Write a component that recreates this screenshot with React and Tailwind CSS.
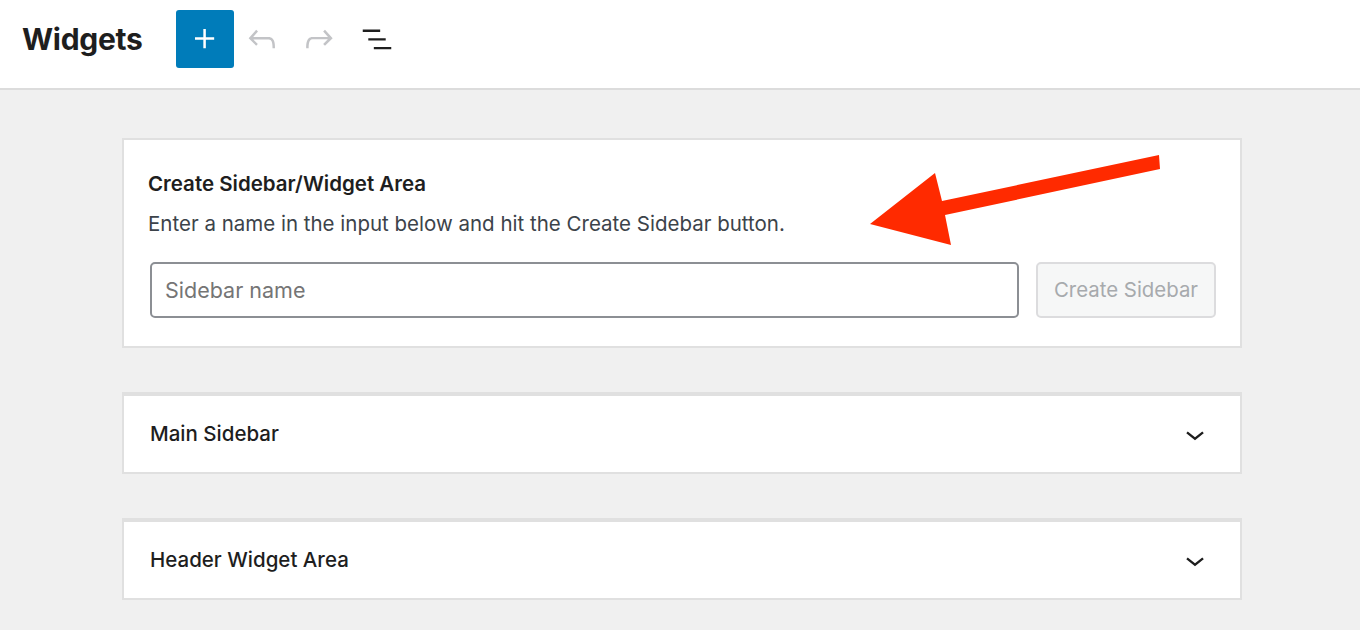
import React from "react";

const FONT = { fontFamily: 'Inter, "Noto Sans", "Liberation Sans", sans-serif' };

function WpIcon({ d, size, className }) {
  return (
    <svg width={size} height={size} viewBox="0 0 24 24" className={className} fill="currentColor" aria-hidden="true">
      <path d={d} />
    </svg>
  );
}

const ICONS = {
  plus: "M11 12.5V17.5H12.5V12.5H17.5V11H12.5V6H11V11H6V12.5H11Z",
  undo: "M18.3 11.7c-.6-.6-1.4-.9-2.3-.9H6.7l2.9-3.3-1.1-1-4.5 5L8.5 16l1-1-2.7-2.7H16c.5 0 .9.2 1.3.5 1 1 1 3.4 1 4.5v.3h1.5v-.2c0-1.5 0-4.3-1.5-5.7z",
  redo: "M15.6 6.5l-1.1 1 2.9 3.3H8c-.9 0-1.7.3-2.3.9-1.4 1.5-1.4 4.2-1.4 5.6v.2h1.5v-.3c0-1.1 0-3.5 1-4.5.3-.3.7-.5 1.3-.5h9.2L14.5 15l1.1 1.1 4.6-4.6-4.6-5z",
  listView: "M3 6h11v1.5H3V6Zm3.5 5.5h11V13h-11v-1.5ZM21 17H10v1.5h11V17Z",
  chevronDown: "M17.5 11.6L12 16l-5.5-4.4.9-1.2L12 14l4.6-3.6 1 1.2z",
};

function Header() {
  return (
    <header className="flex h-[90px] items-center border-b-2 border-[#dcdcdc] bg-white pb-[10px]">
      <h1 className="pl-[22px] pr-[34px] text-[30px] font-bold tracking-[-0.3px] text-[#1e1e1e]">Widgets</h1>
      <button type="button" className="flex h-[58px] w-[58px] items-center justify-center rounded-[3px] bg-[#007cba] text-white">
        <WpIcon d={ICONS.plus} size={40} />
      </button>
      <div className="ml-[8px] flex items-center text-[#c3c4c7]">
        <WpIcon d={ICONS.undo} size={40} />
        <WpIcon d={ICONS.redo} size={40} className="ml-[17px]" />
      </div>
      <WpIcon d={ICONS.listView} size={38} className="ml-[19px] text-[#1e1e1e]" />
    </header>
  );
}

function RedArrow() {
  return (
    <svg
      className="pointer-events-none absolute left-0 top-0"
      width="1120"
      height="210"
      viewBox="0 0 1120 210"
      aria-hidden="true"
    >
      <polygon
        points="1035,15 1036,29 821,75 827,105 746,84 811,33 818,61"
        fill="#ff2a00"
      />
    </svg>
  );
}

function CreateCard() {
  return (
    <section className="relative border-2 border-[#e0e0e0] bg-white px-[24px] pb-[28px] pt-[31px]">
      <h2 className="text-[20.5px] font-semibold leading-[26px] text-[#1e1e1e]">Create Sidebar/Widget Area</h2>
      <p className="mt-[14px] text-[20.5px] leading-[26px] text-[#3c434a]">
        Enter a name in the input below and hit the Create Sidebar button.
      </p>
      <div className="mt-[25px] flex gap-[17px] pl-[2px]">
        <input
          type="text"
          placeholder="Sidebar name"
          className="h-[56px] flex-1 rounded-[5px] border-2 border-[#8c8f94] bg-white px-[13px] text-[21.5px] text-[#1e1e1e] outline-none placeholder:text-[#757575]"
        />
        <button
          type="button"
          disabled
          className="h-[56px] w-[180px] rounded-[5px] border-2 border-[#dcdcde] bg-[#f6f7f7] text-[20.4px] text-[#a7aaad]"
        >
          Create Sidebar
        </button>
      </div>
      <RedArrow />
    </section>
  );
}

function SidebarArea({ title }) {
  return (
    <section className="flex h-[82px] items-center justify-between border-x-2 border-b-2 border-t-4 border-[#e0e0e0] bg-white pl-[26px] pr-[26px]">
      <h3 className="text-[20.5px] font-medium text-[#1e1e1e]">{title}</h3>
      <WpIcon d={ICONS.chevronDown} size={38} className="text-[#1e1e1e]" />
    </section>
  );
}

export default function App() {
  return (
    <div className="min-h-[630px] bg-[#f0f0f0]" style={FONT}>
      <Header />
      <main className="ml-[122px] flex w-[1120px] flex-col gap-[44px] pt-[48px]">
        <CreateCard />
        <SidebarArea title="Main Sidebar" />
        <SidebarArea title="Header Widget Area" />
      </main>
    </div>
  );
}
